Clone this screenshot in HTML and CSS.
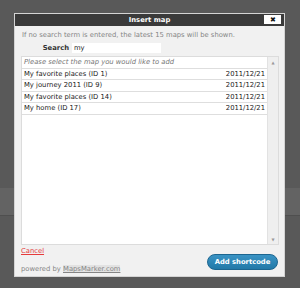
FILE: index.html
```html
<!DOCTYPE html>
<html lang="en">
<head>
  <meta charset="UTF-8" />
  <title>Insert map</title>
  <link rel="stylesheet" href="styles.css">
</head>
<body>

  <div class="backdrop">
    <div class="band-top"></div>
    <div class="band"></div>
    <div class="band-bottom"></div>
  </div>

  <div class="dialog">
    <div class="titlebar">
      <span class="title">Insert map</span>
      <button class="close-btn">&#10006;</button>
    </div>

    <div class="content">
      <p class="info">If no search term is entered, the latest 15 maps will be shown.</p>

      <div class="search-row">
        <label for="search">Search</label>
        <input type="text" id="search" value="my" />
      </div>

      <div class="list">
        <div class="rows">
          <div class="row header">Please select the map you would like to add</div>
          <div class="row"><span>My favorite places (ID 1)</span><span>2011/12/21</span></div>
          <div class="row"><span>My journey 2011 (ID 9)</span><span>2011/12/21</span></div>
          <div class="row"><span>My favorite places (ID 14)</span><span>2011/12/21</span></div>
          <div class="row"><span>My home (ID 17)</span><span>2011/12/21</span></div>
        </div>
        <div class="scrollbar">
          <span>&#9650;</span>
          <span>&#9660;</span>
        </div>
      </div>

      <a href="#" class="cancel">Cancel</a>

      <div class="footer">
        <span class="powered">powered by <a href="#">MapsMarker.com</a></span>
        <button class="add-btn">Add shortcode</button>
      </div>
    </div>
  </div>

</body>
</html>
```

FILE: styles.css
```css
body {
  margin: 0;
  font-family: "DejaVu Sans", Verdana, sans-serif;
  font-size: 6.8px;
  background: #595959;
}

.backdrop {
  height: 288px;
}

.band-top {
  height: 188px;
}

.band {
  height: 27px;
  background: #636363;
  border-bottom: 1px solid #4f4f4f;
}

/* Dialog */
.dialog {
  position: absolute;
  left: 14px;
  top: 13px;
  width: 269px;
  height: 262px;
  background: #f1f1f1;
  border: 1px solid #d4d4d4;
  display: flex;
  flex-direction: column;
}

.titlebar {
  height: 12px;
  background: #3a3a3a;
  color: white;
  font-weight: bold;
  display: flex;
  align-items: center;
  justify-content: center;
  position: relative;
}

.close-btn {
  position: absolute;
  right: 3px;
  top: 1px;
  width: 17px;
  height: 9px;
  padding: 0;
  border: none;
  background: white;
  color: #111;
  font-size: 7px;
  line-height: 9px;
}

.content {
  padding: 0 5px 0 6px;
  display: flex;
  flex-direction: column;
  flex: 1;
}

.info {
  margin: 5px 0 0 1px;
  color: #858585;
  line-height: 9px;
}

.search-row {
  display: flex;
  align-items: center;
  margin-top: 3px;
}

.search-row label {
  width: 48px;
  text-align: right;
  font-weight: bold;
  color: #333;
  margin-right: 3px;
}

.search-row input {
  width: 89px;
  height: 10px;
  box-sizing: border-box;
  border: none;
  padding: 0 2px;
  font-family: inherit;
  font-size: 6.8px;
  color: #222;
  background: white;
}

.list {
  margin-top: 3px;
  height: 189px;
  box-sizing: border-box;
  border: 1px solid #dcdcdc;
  background: white;
  display: flex;
}

.rows {
  flex: 1;
}

.row {
  height: 11.5px;
  box-sizing: border-box;
  padding: 0 2px;
  display: flex;
  justify-content: space-between;
  align-items: center;
  color: #1a1a1a;
  border-bottom: 1px solid #dedede;
}

.row.header {
  color: #777;
  font-style: italic;
}

.scrollbar {
  width: 11px;
  background: #efefef;
  border-left: 1px solid #e2e2e2;
  display: flex;
  flex-direction: column;
  justify-content: space-between;
  align-items: center;
  color: #999;
  font-size: 4px;
  padding: 3px 0 2px;
  box-sizing: border-box;
}

.cancel {
  color: #e53b3b;
  margin-top: 2px;
  line-height: 9px;
  align-self: flex-start;
}

.footer {
  display: flex;
  justify-content: space-between;
  align-items: flex-end;
}

.powered {
  color: #858585;
  margin-bottom: -4px;
  line-height: 9px;
}

.powered a {
  color: #858585;
  background: #e2e2e2;
}

.add-btn {
  width: 71px;
  height: 16px;
  margin-right: 1px;
  margin-top: -2px;
  border: 1px solid #1d6690;
  border-radius: 8px;
  background: linear-gradient(#3a93c4, #2279a8);
  color: white;
  font-family: inherit;
  font-size: 6.8px;
  font-weight: bold;
  padding: 0;
}
```
